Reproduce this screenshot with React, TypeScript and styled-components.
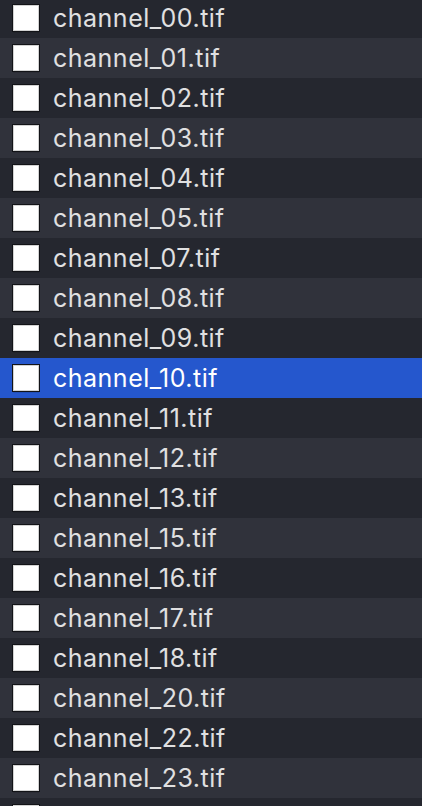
import React from 'react'
import styled, { createGlobalStyle } from 'styled-components'

const GlobalStyle = createGlobalStyle`
  html, body {
    margin: 0;
    padding: 0;
    background: #25272f;
    overflow: hidden;
  }
`

const StyledViewport = styled.div`
  width: 422px;
  height: 806px;
  overflow: hidden;
  background: #25272f;
`

const StyledList = styled.ul`
  list-style: none;
  margin: -2px 0 0 0;
  padding: 0;
`

const StyledRow = styled.li<{ $odd: boolean; $selected: boolean }>`
  display: flex;
  align-items: center;
  height: 40px;
  padding-left: 13px;
  background-color: ${(p) =>
    p.$selected ? '#2557cd' : p.$odd ? '#30323b' : '#25272f'};
  color: ${(p) => (p.$selected ? '#ffffff' : '#e0e0e1')};
  font-family: Inter, 'Liberation Sans', sans-serif;
  font-size: 25px;
  letter-spacing: 0.5px;
  box-sizing: border-box;
`

const StyledCheckbox = styled.span`
  flex: none;
  width: 26px;
  height: 26px;
  margin-top: -1px;
  background: #ffffff;
  border: 1px solid #d2d2d2;
  box-sizing: border-box;
  box-shadow: 0 0 0 1px #121317, 0 1px 1px rgba(0, 0, 0, 0.6);
`

const StyledName = styled.span`
  margin-left: 14px;
  white-space: nowrap;
  line-height: 40px;
`

const files = [
  '00', '01', '02', '03', '04', '05', '07', '08', '09', '10',
  '11', '12', '13', '15', '16', '17', '18', '20', '22', '23',
]

const App = () => {
  return (
    <>
      <GlobalStyle />
      <StyledViewport>
        <StyledList>
          {files.map((n, i) => (
            <StyledRow key={n} $odd={i % 2 === 1} $selected={n === '10'}>
              <StyledCheckbox />
              <StyledName>channel_{n}.tif</StyledName>
            </StyledRow>
          ))}
          {/* next row is scrolled past the bottom edge, only its box peeks in */}
          <StyledRow $odd={false} $selected={false}>
            <StyledCheckbox />
          </StyledRow>
        </StyledList>
      </StyledViewport>
    </>
  )
}

export default App
